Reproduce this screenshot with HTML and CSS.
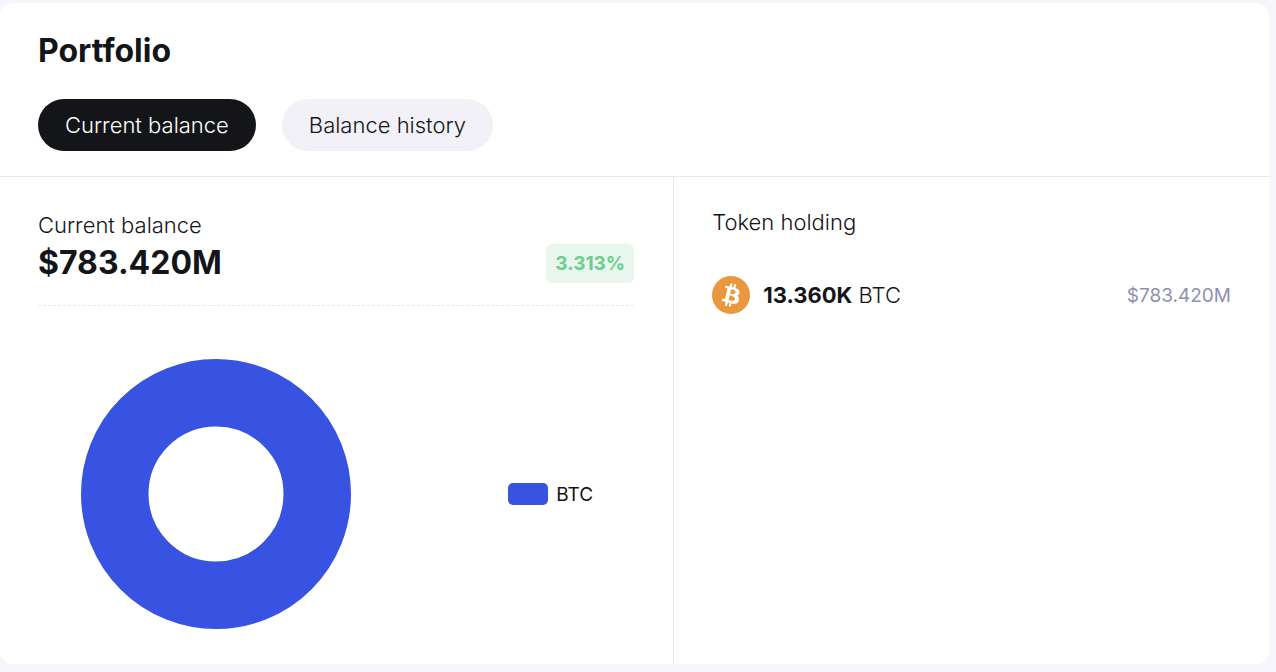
FILE: index.html
```html
<!DOCTYPE html>
<html lang="en">
<head>
    <meta charset="utf-8">
    <title>Portfolio</title>
    <link rel="stylesheet" href="styles.css">
</head>
<body>
    <main class="card">
        <header class="card-header">
            <h1>Portfolio</h1>
            <nav class="tabs">
                <button type="button" class="tab active">Current balance</button>
                <button type="button" class="tab">Balance history</button>
            </nav>
        </header>

        <div class="panels">
            <section class="balance">
                <div class="summary">
                    <div>
                        <h2>Current balance</h2>
                        <div class="total">$783.420M</div>
                    </div>
                    <span class="change">3.313%</span>
                </div>
                <div class="chart">
                    <svg class="donut" viewBox="0 0 270 270" role="img" aria-label="BTC 100%">
                        <circle cx="135" cy="135" r="101.25" fill="none" stroke="#3853e2" stroke-width="67.5"/>
                    </svg>
                    <div class="legend">
                        <span class="swatch"></span>
                        <span>BTC</span>
                    </div>
                </div>
            </section>

            <section class="holdings">
                <h2>Token holding</h2>
                <ul>
                    <li class="token">
                        <svg class="coin" viewBox="0 0 32 32" aria-hidden="true">
                            <circle cx="16" cy="16" r="16" fill="#e9983d"/>
                            <path fill="#fff" fill-rule="evenodd" d="M23.189 14.02c.314-2.096-1.283-3.223-3.465-3.975l.708-2.84-1.728-.43-.69 2.765c-.454-.114-.92-.22-1.385-.326l.695-2.783L15.596 6l-.708 2.839c-.376-.086-.746-.17-1.104-.26l.002-.009-2.384-.595-.46 1.846s1.283.294 1.256.312c.7.175.826.638.805 1.006l-.806 3.235c.048.012.11.03.18.057l-.183-.045-1.13 4.532c-.086.212-.303.531-.793.41.018.025-1.256-.313-1.256-.313l-.858 1.978 2.25.561c.418.105.828.215 1.231.318l-.715 2.872 1.727.43.708-2.84c.472.127.93.245 1.378.357l-.706 2.828 1.728.43.715-2.866c2.948.558 5.164.333 6.097-2.333.752-2.146-.037-3.385-1.588-4.192 1.13-.26 1.98-1.003 2.207-2.538zm-3.95 5.538c-.533 2.147-4.148.986-5.32.695l.95-3.805c1.172.293 4.929.872 4.37 3.11zm.535-5.569c-.487 1.953-3.495.96-4.47.717l.86-3.45c.975.243 4.118.696 3.61 2.733z"/>
                        </svg>
                        <span class="amount"><strong>13.360K</strong> BTC</span>
                        <span class="value">$783.420M</span>
                    </li>
                </ul>
            </section>
        </div>
    </main>
</body>
</html>
```

FILE: styles.css
```css
* { box-sizing: border-box; }
body { margin: 0; padding: 3px 7px 8px 0; min-height: 100vh; display: flex; background: #f5f5fb; color: #141518; font-family: Inter, sans-serif; font-weight: 300; }
h1, h2, ul { margin: 0; padding: 0; }

.card { flex: 1; display: flex; flex-direction: column; background: white; border-radius: 13px; }
.card-header { padding: 28px 38px 25px; border-bottom: 1px solid #e8e8ea; }
h1 { font-size: 32px; line-height: 40px; font-weight: 700; }
h2 { font-size: 22px; line-height: 32px; font-weight: 300; }

.tabs { display: flex; gap: 26px; margin-top: 28px; }
.tab { padding: 0 27px; height: 52px; border: none; border-radius: 26px; background: #f1f1f7; color: #141518; font: inherit; font-size: 22px; cursor: pointer; }
.tab.active { background: #141518; color: white; }

.panels { flex: 1; display: grid; grid-template-columns: 17fr 15fr; }
.balance { display: flex; flex-direction: column; padding: 32px 39px 35px 38px; border-right: 1px solid #e8e8ea; }
.summary { display: flex; justify-content: space-between; align-items: flex-end; padding-bottom: 21px; border-bottom: 1px dashed #e8e8ea; }
.total { font-size: 32px; line-height: 43px; font-weight: 700; }
.change { padding: 0 9px; margin-bottom: 1px; border-radius: 6px; background: #e8f6ed; color: #6ace8c; font-size: 19px; line-height: 39px; font-weight: 700; }

.chart { flex: 1; display: flex; justify-content: space-between; align-items: flex-end; padding: 0 41px 0 43px; }
.donut { width: 270px; height: 270px; }
.legend { display: flex; align-items: center; gap: 8px; height: 270px; font-size: 19px; font-weight: 400; }
.swatch { width: 40px; height: 22px; border-radius: 5px; background: #3853e2; }

.holdings { padding: 29px 38px; }
.token { display: flex; align-items: center; margin-top: 38px; list-style: none; }
.coin { width: 38px; height: 38px; margin-right: 13px; }
.amount { font-size: 22px; }
.amount strong { font-weight: 700; }
.value { margin-left: auto; color: #8f8fae; font-size: 19px; font-weight: 400; }
```
